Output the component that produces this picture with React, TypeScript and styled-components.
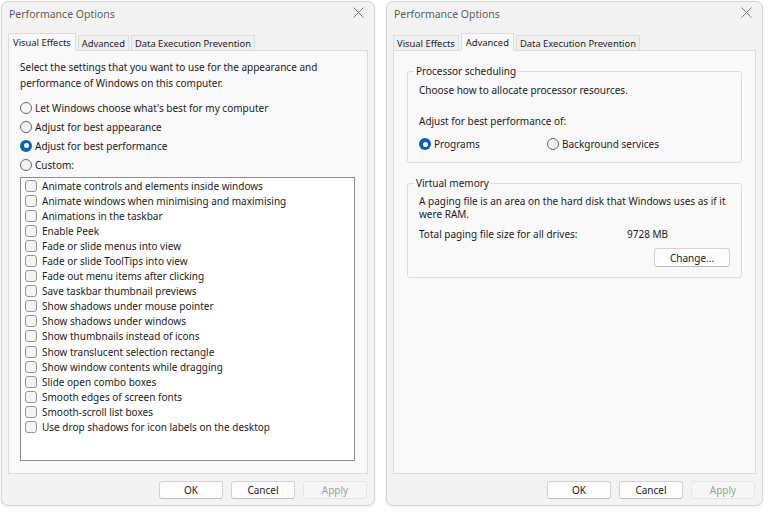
import React from 'react';
import styled, { createGlobalStyle } from 'styled-components';

const visualEffects = [
  'Animate controls and elements inside windows',
  'Animate windows when minimising and maximising',
  'Animations in the taskbar',
  'Enable Peek',
  'Fade or slide menus into view',
  'Fade or slide ToolTips into view',
  'Fade out menu items after clicking',
  'Save taskbar thumbnail previews',
  'Show shadows under mouse pointer',
  'Show shadows under windows',
  'Show thumbnails instead of icons',
  'Show translucent selection rectangle',
  'Show window contents while dragging',
  'Slide open combo boxes',
  'Smooth edges of screen fonts',
  'Smooth-scroll list boxes',
  'Use drop shadows for icon labels on the desktop',
];

const presets = [
  { label: "Let Windows choose what's best for my computer", checked: false },
  { label: 'Adjust for best appearance', checked: false },
  { label: 'Adjust for best performance', checked: true },
  { label: 'Custom:', checked: false },
];

const tabs = ['Visual Effects', 'Advanced', 'Data Execution Prevention'];

const CloseIcon = () => (
  <svg width="11" height="11" viewBox="0 0 11 11">
    <path d="M0.5 0.5 L10.5 10.5 M10.5 0.5 L0.5 10.5" stroke="#7a7a7a" strokeWidth="1" fill="none" />
  </svg>
);

interface DialogProps {
  width: number;
  activeTab: number;
  children: React.ReactNode;
}

const Dialog = ({ width, activeTab, children }: DialogProps) => (
  <Window $width={width}>
    <TitleBar>
      <Title>Performance Options</Title>
      <CloseIcon />
    </TitleBar>
    <TabRow>
      {tabs.map((t, i) => (
        <Tab key={t} $active={i === activeTab}>
          {t}
        </Tab>
      ))}
    </TabRow>
    <Panel>{children}</Panel>
    <Footer>
      <Button>OK</Button>
      <Button>Cancel</Button>
      <Button $disabled>Apply</Button>
    </Footer>
  </Window>
);

const App = () => {
  return (
    <>
      <GlobalStyle />
      <Page>
        <Dialog width={374} activeTab={0}>
          <VisualPane>
            <Intro>
              Select the settings that you want to use for the appearance and
              <br />
              performance of Windows on this computer.
            </Intro>
            <RadioList>
              {presets.map((p) => (
                <RadioRow key={p.label}>
                  <Radio $checked={p.checked} />
                  {p.label}
                </RadioRow>
              ))}
            </RadioList>
            <ListBox>
              {visualEffects.map((v) => (
                <CheckRow key={v}>
                  <CheckBox />
                  {v}
                </CheckRow>
              ))}
            </ListBox>
          </VisualPane>
        </Dialog>

        <Dialog width={377} activeTab={1}>
          <AdvancedPane>
            <Group>
              <Legend>Processor scheduling</Legend>
              <GroupText>Choose how to allocate processor resources.</GroupText>
              <GroupText $top={17}>Adjust for best performance of:</GroupText>
              <ChoiceRow>
                <Choice $width={128}>
                  <Radio $checked />
                  Programs
                </Choice>
                <Choice>
                  <Radio $checked={false} />
                  Background services
                </Choice>
              </ChoiceRow>
            </Group>
            <Group $height={102}>
              <Legend>Virtual memory</Legend>
              <Paragraph>
                A paging file is an area on the hard disk that Windows uses as if it
                <br />
                were RAM.
              </Paragraph>
              <SizeRow>
                <SizeLabel>Total paging file size for all drives:</SizeLabel>
                <span>9728 MB</span>
              </SizeRow>
              <ButtonRow>
                <Button $wide>Change...</Button>
              </ButtonRow>
            </Group>
          </AdvancedPane>
        </Dialog>
      </Page>
    </>
  );
};

export default App;

const GlobalStyle = createGlobalStyle`
  html, body {
    margin: 0;
    padding: 0;
    background: #ffffff;
  }
  body {
    font-family: 'Noto Sans', 'Liberation Sans', sans-serif;
    font-size: 10px;
    color: #1c1c1c;
  }
`;

const Page = styled.div`
  display: flex;
  gap: 11px;
  padding: 1px 0 0 1px;
  width: 768px;
  height: 512px;
  box-sizing: border-box;
`;

const Window = styled.div<{ $width: number }>`
  width: ${(p) => p.$width}px;
  height: 505px;
  box-sizing: border-box;
  background: #f3f3f3;
  border: 1px solid #d4d4d4;
  border-radius: 7px;
  display: flex;
  flex-direction: column;
  box-shadow: 0 1px 3px rgba(0, 0, 0, 0.08);
`;

const TitleBar = styled.div`
  height: 31px;
  box-sizing: border-box;
  display: flex;
  align-items: flex-start;
  justify-content: space-between;
  padding: 5px 10px 0 7px;
  flex-shrink: 0;
`;

const Title = styled.span`
  color: #5e5e5e;
  font-size: 10.5px;
  line-height: 14px;
`;

const TabRow = styled.div`
  display: flex;
  align-items: flex-end;
  gap: 2px;
  height: 18px;
  padding: 0 6px;
  margin-bottom: -1px;
  position: relative;
  z-index: 1;
`;

const Tab = styled.div<{ $active: boolean }>`
  height: ${(p) => (p.$active ? 18 : 16)}px;
  box-sizing: border-box;
  padding: 0 ${(p) => (p.$active ? 4 : 3)}px;
  display: flex;
  align-items: center;
  border: 1px solid #dcdcdc;
  border-bottom: ${(p) => (p.$active ? '1px solid #f9f9f9' : '1px solid #dcdcdc')};
  background: ${(p) => (p.$active ? '#f9f9f9' : '#f0f0f0')};
  font-size: 9.4px;
  color: #1c1c1c;
`;

const Panel = styled.div`
  flex: 1;
  margin: 0 6px;
  background: #f9f9f9;
  border: 1px solid #dcdcdc;
  box-sizing: border-box;
`;

const Footer = styled.div`
  height: 31px;
  flex-shrink: 0;
  display: flex;
  align-items: center;
  justify-content: flex-end;
  gap: 8px;
  padding: 0 7px 0 0;
`;

const Button = styled.div<{ $disabled?: boolean; $wide?: boolean }>`
  width: ${(p) => (p.$wide ? 76 : 64)}px;
  height: ${(p) => (p.$wide ? 19 : 18)}px;
  box-sizing: border-box;
  display: flex;
  align-items: center;
  justify-content: center;
  border-radius: 3px;
  border: 1px solid ${(p) => (p.$disabled ? '#e6e6e6' : '#d2d2d2')};
  border-bottom-color: ${(p) => (p.$disabled ? '#e6e6e6' : '#bdbdbd')};
  background: ${(p) => (p.$disabled ? '#f6f6f6' : '#fdfdfd')};
  color: ${(p) => (p.$disabled ? '#a0a0a0' : '#1c1c1c')};
  font-size: 10px;
`;

const VisualPane = styled.div`
  padding: 8px 12px 0 11px;
  display: flex;
  flex-direction: column;
`;

const Intro = styled.div`
  line-height: 16px;
`;

const RadioList = styled.div`
  margin-top: 7px;
  display: flex;
  flex-direction: column;
`;

const RadioRow = styled.div`
  height: 19px;
  display: flex;
  align-items: center;
  gap: 3px;
`;

const Radio = styled.span<{ $checked: boolean }>`
  width: 12px;
  height: 12px;
  box-sizing: border-box;
  border-radius: 50%;
  flex-shrink: 0;
  position: relative;
  border: ${(p) => (p.$checked ? 'none' : '1px solid #6a6a6a')};
  background: ${(p) => (p.$checked ? '#0a62bd' : '#f4f4f4')};
  &::after {
    content: '';
    display: ${(p) => (p.$checked ? 'block' : 'none')};
    position: absolute;
    left: 3.5px;
    top: 3.5px;
    width: 5px;
    height: 5px;
    border-radius: 50%;
    background: #ffffff;
  }
`;

const ListBox = styled.div`
  margin-top: 3px;
  height: 284px;
  box-sizing: border-box;
  background: #ffffff;
  border: 1px solid #8c8c8c;
  padding: 0 0 0 4px;
`;

const CheckRow = styled.div`
  height: 15.1px;
  display: flex;
  align-items: center;
  gap: 5px;
  white-space: nowrap;
`;

const CheckBox = styled.span`
  width: 12px;
  height: 12px;
  box-sizing: border-box;
  border: 1px solid #959595;
  border-radius: 3px;
  background: #f4f4f4;
  flex-shrink: 0;
`;

const AdvancedPane = styled.div`
  padding: 13px 13px 0 13px;
  display: flex;
  flex-direction: column;
  gap: 13px;
`;

const Group = styled.fieldset<{ $height?: number }>`
  margin: 0;
  border: 1px solid #dddddd;
  border-radius: 3px;
  padding: 0 11px 0 11px;
  ${(p) => (p.$height ? `height: ${p.$height}px;` : '')}
  box-sizing: border-box;
  min-width: 0;
`;

const Legend = styled.legend`
  padding: 0 2px;
  margin-left: -5px;
  line-height: 14px;
  color: #1c1c1c;
`;

const GroupText = styled.div<{ $top?: number }>`
  margin-top: ${(p) => p.$top ?? 5}px;
  line-height: 14px;
`;

const ChoiceRow = styled.div`
  display: flex;
  margin: 9px 0 11px;
`;

const Choice = styled.div<{ $width?: number }>`
  display: flex;
  align-items: center;
  gap: 3px;
  height: 14px;
  ${(p) => (p.$width ? `width: ${p.$width}px;` : '')}
`;

const Paragraph = styled.div`
  margin-top: 5px;
  line-height: 13px;
`;

const SizeRow = styled.div`
  display: flex;
  margin-top: 6px;
  line-height: 14px;
`;

const SizeLabel = styled.span`
  width: 208px;
`;

const ButtonRow = styled.div`
  display: flex;
  justify-content: flex-end;
  margin-top: 7px;
`;
